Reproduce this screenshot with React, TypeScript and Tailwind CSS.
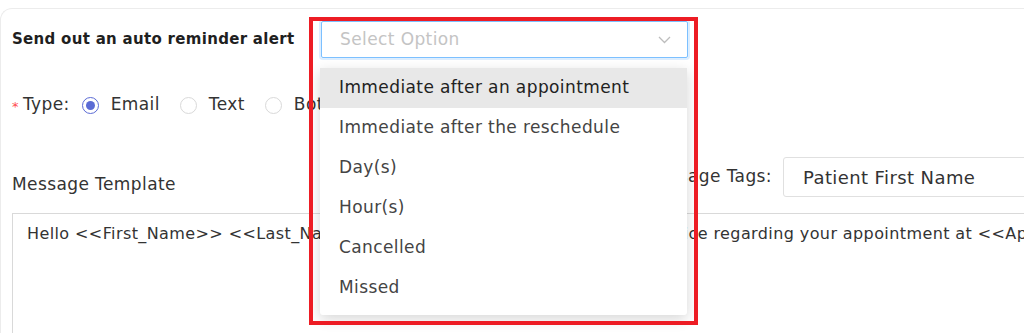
import React from "react"

const font = { fontFamily: '"DejaVu Sans", "Noto Sans", sans-serif' }

function Radio({ checked }: { checked?: boolean }) {
  return (
    <span
      className={`flex h-[17px] w-[17px] shrink-0 items-center justify-center rounded-full border bg-white ${
        checked ? "border-[#5b6bd5]" : "border-[#d9d9d9]"
      }`}
    >
      {checked && <span className="h-[9px] w-[9px] rounded-full bg-[#5b6bd5]" />}
    </span>
  )
}

const options = [
  "Immediate after an appointment",
  "Immediate after the reschedule",
  "Day(s)",
  "Hour(s)",
  "Cancelled",
  "Missed",
]

export default function App() {
  return (
    <div className="relative h-[333px] w-[1024px] overflow-hidden bg-white pt-2 text-[#333] tracking-[0.4px]" style={font}>
      <div className="h-[400px] w-[1080px] rounded-tl-[12px] border-t border-l border-[#ececec] pl-[11px]">
        <div className="flex h-[60px] items-center pt-[1px]">
          <div className="w-[309px] text-[15px] font-bold tracking-[0.3px] text-[#1f1f1f]">
            Send out an auto reminder alert
          </div>
          <div className="flex h-[37px] w-[367px] items-center justify-between rounded-[2px] border border-[#7cc0ff] pl-[18px] pr-[16px] shadow-[0_0_0_2px_rgba(24,144,255,0.15)]">
            <span className="text-[17px] text-[#c4c4c4]">Select Option</span>
            <svg width="13" height="8" viewBox="0 0 13 8" fill="none" stroke="#bdbdbd" strokeWidth="1.3">
              <path d="M1 1l5.5 5.5L12 1" />
            </svg>
          </div>
        </div>

        <div className="mt-[20px] flex h-[32px] items-center text-[17px]">
          <span className="mr-[4px] mt-[3px] text-[13px] text-[#ff4d4f]">*</span>
          <span className="mr-[12px]">Type:</span>
          <Radio checked />
          <span className="ml-[12px] mr-[20px]">Email</span>
          <Radio />
          <span className="ml-[12px] mr-[20px]">Text</span>
          <Radio />
          <span className="ml-[12px]">Both</span>
        </div>

        <div className="mt-[36px] flex h-[40px] w-[1024px] items-center">
          <span className="flex-1 pt-[16px] text-[17px]">Message Template</span>
          <span className="mr-[11px] text-[17px]">Message Tags:</span>
          <div className="-mr-[40px] flex h-[40px] w-[293px] shrink-0 items-center rounded-l-[3px] border border-[#e0e0e0] pl-[19px] text-[18px]">
            Patient First Name
          </div>
        </div>

        <div className="mt-[16px] h-[140px] border border-[#d9d9d9] px-[14px] pt-[8px] text-[16px] whitespace-nowrap">
          Hello &lt;&lt;First_Name&gt;&gt; &lt;&lt;Last_Name&gt;&gt;, this is a reminder call from your office regarding your appointment at &lt;&lt;Appointment_Date&gt;&gt;
        </div>
      </div>

      <div className="absolute left-[320px] top-[68px] w-[367px] rounded-[3px] bg-white shadow-[0_4px_14px_rgba(0,0,0,0.16)]">
        {options.map((o, i) => (
          <div
            key={o}
            className={`flex h-[40px] items-center pl-[19px] text-[17px] ${i === 0 ? "bg-[#e8e8e8] text-[#222]" : "text-[#444]"}`}
          >
            {o}
          </div>
        ))}
        <div className="h-[7px]" />
      </div>

      <div className="pointer-events-none absolute left-[309px] top-[17px] h-[308px] w-[389px] border-[4px] border-[#ed1c24]" />
    </div>
  )
}
